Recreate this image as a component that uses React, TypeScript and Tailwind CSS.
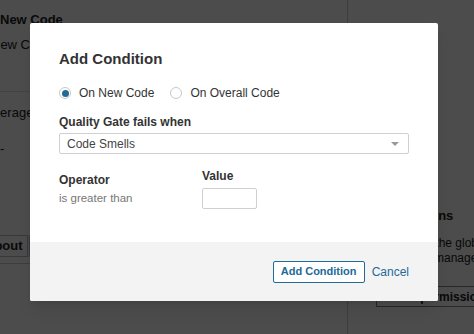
import React from "react";

const FONT = { fontFamily: '"Liberation Sans", Arial, sans-serif' };

function Radio({ checked, label }: { checked: boolean; label: string }) {
  return (
    <label className="flex items-center gap-2 text-[12px] text-[#333]">
      <span className="flex h-[12px] w-[12px] items-center justify-center rounded-full border border-[#c8c8c8] bg-white">
        {checked && <span className="h-[7px] w-[7px] rounded-full bg-[#236a97]" />}
      </span>
      {label}
    </label>
  );
}

function BackgroundPage() {
  return (
    <div className="flex h-[334px] w-[474px] overflow-hidden bg-white text-[#222]">
      <div className="flex w-[348px] shrink-0 flex-col border-r border-[#ccc]">
        <div className="h-[92px] border-b border-[#ddd] pt-[12px]">
          <p className="text-[13px] font-bold leading-[16px]">New Code</p>
          <p className="ml-[-9px] mt-[9px] text-[13px] leading-[16px]">New Code definition</p>
        </div>
        <p className="ml-[-23px] mt-[13px] text-[13px] leading-[16px]">Coverage on new code</p>
        <p className="mt-[20px] text-[13px] leading-[16px]">-</p>
        <div className="mt-[78px] flex h-[29px] border-b border-[#ccc]">
          <div className="ml-[-20px] flex h-[22px] items-center border border-[#bbb] px-[4px] text-[13px] font-bold">
            About
          </div>
          <div className="ml-[1px] h-[22px] w-[40px] border border-[#bbb]" />
        </div>
      </div>
      <div className="flex min-w-0 flex-col pl-[28px] pt-[208px]">
        <p className="whitespace-nowrap text-[13px] font-bold leading-[16px]">Permissions</p>
        <p className="mt-[12px] whitespace-nowrap text-[12px] leading-[15px]">
          Users with the global permission
          <br />
          users who manage gates
        </p>
        <div className="mt-[20px] flex h-[21px] w-[120px] shrink-0 items-center border border-[#888] pl-[8px] text-[12px] font-bold whitespace-nowrap">
          Grant permission
        </div>
      </div>
    </div>
  );
}

export default function App() {
  return (
    <div className="relative h-[334px] w-[474px] overflow-hidden" style={FONT}>
      <BackgroundPage />
      <div className="absolute inset-0 bg-black/70" />
      <div className="absolute left-[30px] top-[23px] flex w-[408px] flex-col overflow-hidden rounded-[2px] bg-white shadow-lg">
        <div className="flex h-[219px] flex-col px-[29px] pt-[26px]">
          <h2 className="text-[15px] font-bold leading-[20px] text-[#333]">Add Condition</h2>
          <div className="mt-[16px] flex h-[16px] items-center gap-[16px]">
            <Radio checked label="On New Code" />
            <Radio checked={false} label="On Overall Code" />
          </div>
          <p className="mt-[13px] text-[12px] font-bold leading-[16px] text-[#333]">Quality Gate fails when</p>
          <div className="mt-[3px] flex h-[21px] items-center justify-between rounded-[2px] border border-[#d0d0d0] pl-[7px] pr-[9px] text-[12px] text-[#444]">
            <span>Code Smells</span>
            <span className="h-0 w-0 border-x-[4px] border-t-[4px] border-x-transparent border-t-[#999]" />
          </div>
          <div className="mt-[14px] flex">
            <div className="w-[143px] pt-[4px]">
              <p className="text-[12px] font-bold leading-[16px] text-[#333]">Operator</p>
              <p className="mt-[2px] text-[11.5px] leading-[16px] text-[#777]">is greater than</p>
            </div>
            <div>
              <p className="text-[12px] font-bold leading-[16px] text-[#333]">Value</p>
              <div className="mt-[4px] h-[21px] w-[55px] rounded-[2px] border border-[#d0d0d0] bg-white" />
            </div>
          </div>
        </div>
        <div className="flex h-[59px] items-center justify-end gap-[7px] bg-[#f3f3f3] pr-[29px]">
          <button
            type="button"
            className="flex h-[22px] w-[92px] items-center justify-center rounded-[2px] border border-[#236a97] bg-white text-[11px] font-bold text-[#236a97]"
          >
            Add Condition
          </button>
          <button type="button" className="text-[12px] text-[#236a97]">
            Cancel
          </button>
        </div>
      </div>
    </div>
  );
}
